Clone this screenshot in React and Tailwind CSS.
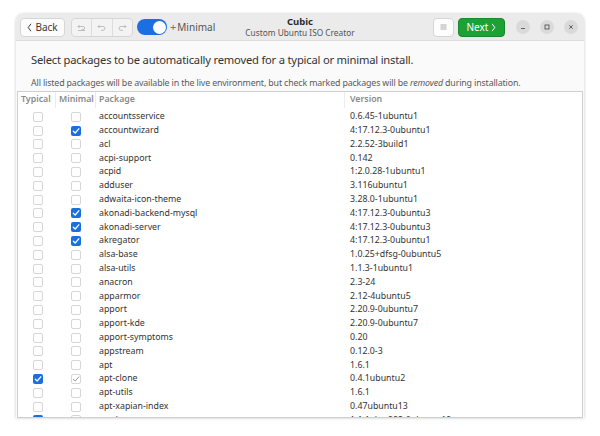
import React from "react";

const rows = [
  ["accountsservice", "0.6.45-1ubuntu1", 0, 0],
  ["accountwizard", "4:17.12.3-0ubuntu1", 0, 1],
  ["acl", "2.2.52-3build1", 0, 0],
  ["acpi-support", "0.142", 0, 0],
  ["acpid", "1:2.0.28-1ubuntu1", 0, 0],
  ["adduser", "3.116ubuntu1", 0, 0],
  ["adwaita-icon-theme", "3.28.0-1ubuntu1", 0, 0],
  ["akonadi-backend-mysql", "4:17.12.3-0ubuntu3", 0, 1],
  ["akonadi-server", "4:17.12.3-0ubuntu3", 0, 1],
  ["akregator", "4:17.12.3-0ubuntu1", 0, 1],
  ["alsa-base", "1.0.25+dfsg-0ubuntu5", 0, 0],
  ["alsa-utils", "1.1.3-1ubuntu1", 0, 0],
  ["anacron", "2.3-24", 0, 0],
  ["apparmor", "2.12-4ubuntu5", 0, 0],
  ["apport", "2.20.9-0ubuntu7", 0, 0],
  ["apport-kde", "2.20.9-0ubuntu7", 0, 0],
  ["apport-symptoms", "0.20", 0, 0],
  ["appstream", "0.12.0-3", 0, 0],
  ["apt", "1.6.1", 0, 0],
  ["apt-clone", "0.4.1ubuntu2", 1, 2],
  ["apt-utils", "1.6.1", 0, 0],
  ["apt-xapian-index", "0.47ubuntu13", 0, 0],
  ["aptdaemon", "1.1.1+bzr982-0ubuntu19", 1, 0],
];

function Check({ state }) {
  if (state === 1) {
    return (
      <div className="w-[10px] h-[10px] rounded-[2px] bg-[#1a6fdf] flex items-center justify-center">
        <svg width="8" height="8" viewBox="0 0 8 8">
          <path d="M1.3 4.2 L3.2 6 L6.8 1.8" fill="none" stroke="#fff" strokeWidth="1.3" strokeLinecap="round" strokeLinejoin="round" />
        </svg>
      </div>
    );
  }
  if (state === 2) {
    return (
      <div className="w-[10px] h-[10px] rounded-[2px] bg-white border border-[#d6d6d6] flex items-center justify-center">
        <svg width="8" height="8" viewBox="0 0 8 8">
          <path d="M1.3 4.2 L3.2 6 L6.8 1.8" fill="none" stroke="#9a9a9a" strokeWidth="1" strokeLinecap="round" strokeLinejoin="round" />
        </svg>
      </div>
    );
  }
  return <div className="w-[10px] h-[10px] rounded-[2px] bg-white border border-[#d6d6d6]" />;
}

export default function App() {
  return (
    <div className="w-[600px] h-[436px] bg-white overflow-hidden pt-[14px] px-[16px]" style={{ fontFamily: '"Noto Sans", "DejaVu Sans", sans-serif' }}>
      <div className="w-[568px] h-[404px] bg-[#fafafa] rounded-t-[8px] shadow-[0_0_3px_rgba(0,0,0,0.25)] flex flex-col overflow-hidden">
        {/* Header bar */}
        <div className="h-[27px] shrink-0 bg-[#ebebeb] border-b border-[#dcdcdc] grid grid-cols-[1fr_auto_1fr] items-center px-[4px]">
          <div className="flex items-center">
            <div className="h-[19px] w-[45px] rounded-[4px] bg-[#fcfcfc] border border-[#d6d6d6] flex items-center justify-center gap-[3px] text-[10px] text-[#3a3a3a]">
              <svg width="5" height="9" viewBox="0 0 5 9"><path d="M4 0.8 L1.2 4.5 L4 8.2" fill="none" stroke="#3a3a3a" strokeWidth="1" /></svg>
              <span>Back</span>
            </div>
            <div className="ml-[6px] h-[19px] w-[62px] rounded-[4px] bg-[#f3f3f3] border border-[#d6d6d6] flex">
              <div className="flex-1 flex items-center justify-center border-r border-[#dcdcdc]">
                <svg width="9" height="7" viewBox="0 0 9 7"><path d="M2.5 1 L1 2.5 L2.5 4 M1 2.5 H6 A1.6 1.6 0 0 1 6 5.7 H4.5 M1 6.5 H8" fill="none" stroke="#b0b0b0" strokeWidth="0.8" /></svg>
              </div>
              <div className="flex-1 flex items-center justify-center border-r border-[#dcdcdc]">
                <svg width="9" height="7" viewBox="0 0 9 7"><path d="M2.5 1 L1 2.5 L2.5 4 M1 2.5 H6 A1.9 1.9 0 0 1 6 6.3 H4" fill="none" stroke="#b0b0b0" strokeWidth="0.8" /></svg>
              </div>
              <div className="flex-1 flex items-center justify-center">
                <svg width="9" height="7" viewBox="0 0 9 7"><path d="M6.5 1 L8 2.5 L6.5 4 M8 2.5 H3 A1.9 1.9 0 0 0 3 6.3 H5" fill="none" stroke="#b0b0b0" strokeWidth="0.8" /></svg>
              </div>
            </div>
            <div className="ml-[4px] h-[16px] w-[30px] rounded-full bg-[#1c6fe0] flex items-center justify-end pr-[1.5px]">
              <div className="w-[13px] h-[13px] rounded-full bg-white" />
            </div>
            <span className="ml-[3px] text-[10px] text-[#555] flex items-center gap-[1px]">
              <span className="text-[11px] text-[#777]">+</span>Minimal
            </span>
          </div>
          <div className="flex flex-col items-center leading-none pt-[1px]">
            <span className="text-[9.5px] font-bold text-[#2c2c2c]">Cubic</span>
            <span className="text-[8.3px] text-[#555] mt-[2.5px]">Custom Ubuntu ISO Creator</span>
          </div>
          <div className="flex items-center justify-end">
            <div className="h-[19px] w-[21px] rounded-[4px] bg-[#fdfdfd] border border-[#d6d6d6] flex items-center justify-center">
              <svg width="7" height="6" viewBox="0 0 7 6"><path d="M0.5 1 H6.5 M0.5 3 H6.5 M0.5 5 H6.5" stroke="#888" strokeWidth="0.7" /></svg>
            </div>
            <div className="ml-[4px] h-[19px] w-[47px] rounded-[4px] bg-[#1ba134] border border-[#178a2c] flex items-center justify-center gap-[3px] text-[10px] text-white">
              <span>Next</span>
              <svg width="5" height="9" viewBox="0 0 5 9"><path d="M1 0.8 L3.8 4.5 L1 8.2" fill="none" stroke="#fff" strokeWidth="1" /></svg>
            </div>
            <div className="ml-[11px] w-[14px] h-[14px] rounded-full bg-[#dadada] flex items-center justify-center">
              <svg width="6" height="6" viewBox="0 0 6 6"><path d="M1 4.5 H5" stroke="#444" strokeWidth="0.8" /></svg>
            </div>
            <div className="ml-[10px] w-[14px] h-[14px] rounded-full bg-[#dadada] flex items-center justify-center">
              <svg width="6" height="6" viewBox="0 0 6 6"><rect x="1" y="1" width="4" height="4" fill="none" stroke="#444" strokeWidth="0.8" /></svg>
            </div>
            <div className="ml-[10px] mr-[2px] w-[14px] h-[14px] rounded-full bg-[#dadada] flex items-center justify-center">
              <svg width="6" height="6" viewBox="0 0 6 6"><path d="M1.2 1.2 L4.8 4.8 M4.8 1.2 L1.2 4.8" stroke="#444" strokeWidth="0.8" /></svg>
            </div>
          </div>
        </div>

        {/* Body */}
        <div className="pl-[15px] pt-[12px] text-[11.2px] text-[#333] leading-[14px] tracking-[-0.2px]">
          Select packages to be automatically removed for a typical or minimal install.
        </div>
        <div className="pl-[15px] pt-[11px] text-[8.85px] text-[#5a5a5a] leading-[11px] tracking-[-0.15px]">
          All listed packages will be available in the live environment, but check marked packages will be <em>removed</em> during installation.
        </div>

        <div className="mt-[2px] mx-[1px] flex-1 bg-white border border-[#cfcfcf] overflow-hidden">
          <div className="h-[18px] pb-[2px] flex items-center text-[8.8px] text-[#8a8a8a] font-semibold">
            <div className="w-[38px] h-full flex items-center pl-[3px] border-r border-[#ececec]">Typical</div>
            <div className="w-[40px] h-full flex items-center pl-[3px] border-r border-[#ececec]">Minimal</div>
            <div className="w-[249px] h-full flex items-center pl-[3px] border-r border-[#ececec]">Package</div>
            <div className="flex-1 h-full flex items-center pl-[5px]">Version</div>
          </div>
          {rows.map(([name, ver, t, m]) => (
            <div key={name} className="h-[13.8px] flex items-center text-[8.8px] text-[#333]">
              <div className="w-[38px] flex justify-center pl-[2px]"><Check state={t} /></div>
              <div className="w-[40px] flex justify-center"><Check state={m} /></div>
              <div className="w-[249px] pl-[3px]">{name}</div>
              <div className="flex-1 pl-[5px]">{ver}</div>
            </div>
          ))}
        </div>
      </div>
    </div>
  );
}
